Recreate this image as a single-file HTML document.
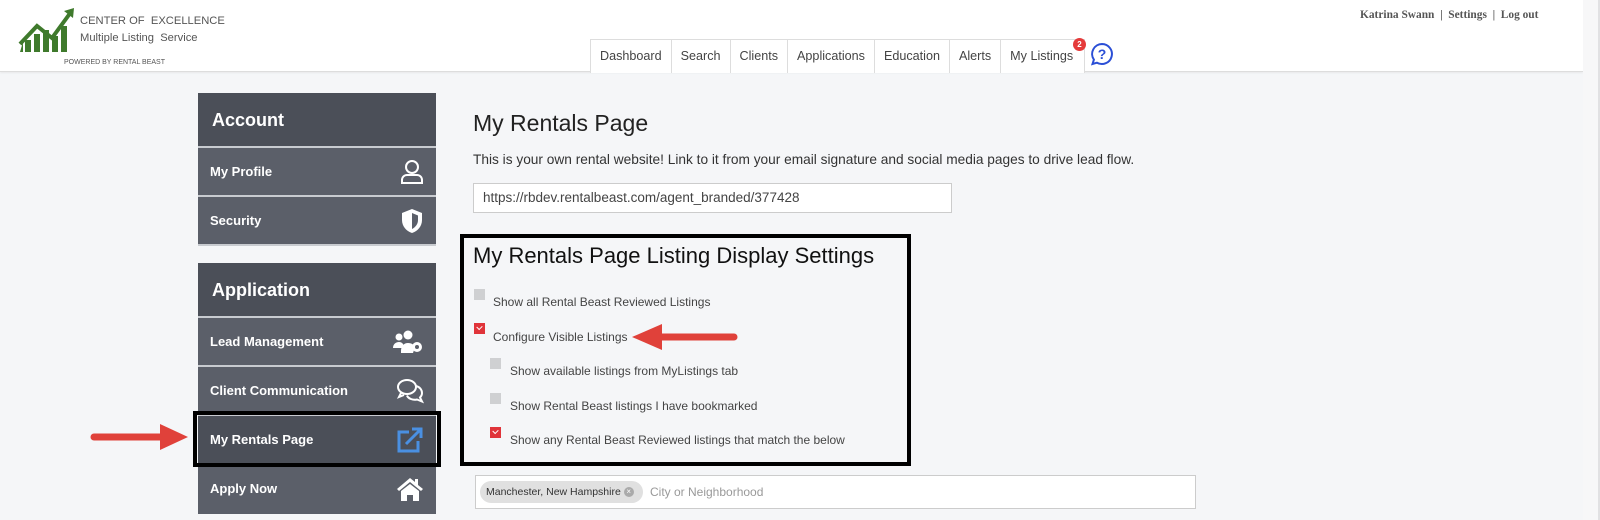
<!DOCTYPE html>
<html><head><meta charset="utf-8"><style>
*{box-sizing:border-box;margin:0;padding:0}
body{width:1600px;height:520px;overflow:hidden;background:#f5f6f8;font-family:"Liberation Sans",sans-serif;position:relative;color:#222}
.hdr{position:absolute;left:0;top:0;width:1583px;height:72px;background:#fff;border-bottom:1px solid #ddd;box-shadow:0 1px 2px rgba(0,0,0,.06)}
.sb{position:absolute;left:1583px;top:0;width:17px;height:520px;background:#f7f7f8;border-right:2px solid #e1e1e3}
.abs{position:absolute;white-space:nowrap}
.tabs{position:absolute;left:590px;top:39px;height:34px;display:flex;border-top:1px solid #ddd}
.tabs div{border-left:1px solid #ddd;padding:0 9px;font-size:12.6px;line-height:33px;color:#444;background:#fff}
.tabs div:last-child{border-right:1px solid #ddd}
.side{position:absolute;left:198px;width:238px}
.sh{background:#4b4f58;color:#fff;font-weight:bold;font-size:18px;padding-left:14px;height:55px;line-height:55px;border-bottom:2px solid #c8cbd0}
.si{background:#5b5f69;color:#fff;font-weight:bold;font-size:13px;padding-left:12px;height:49px;line-height:47px;border-bottom:2px solid #c8cbd0;position:relative}
.si svg{position:absolute;right:12px;top:11px}
.cb{position:absolute;width:11px;height:11px;background:#cfd0d2}
.cb.on{background:#e0343a}
.cb.on::after{content:"";position:absolute;left:3px;top:2px;width:4px;height:3px;border-left:1.5px solid #fff;border-bottom:1.5px solid #fff;transform:rotate(-45deg)}
.lbl{position:absolute;font-size:12px;color:#444;white-space:nowrap}
</style></head><body>
<div class="hdr"></div>
<div class="sb"></div>
<svg class="abs" style="left:18px;top:8px" width="58" height="46" viewBox="0 0 58 46">
<g fill="#3f7a2c"><polygon points="2,44 5,44 5,34"/><rect x="7" y="32" width="6" height="12"/><rect x="16" y="26" width="6" height="18"/><rect x="25" y="22" width="6" height="22"/><rect x="34" y="28" width="6" height="16"/><rect x="43" y="18" width="6" height="26"/></g>
<polyline points="2,36 19,18 34,30 53,4" fill="none" stroke="#3f7a2c" stroke-width="4"/>
<polygon points="56,0 46,3 55,10" fill="#3f7a2c"/></svg>
<div class="abs" style="left:80px;top:15px;font-size:11.2px;color:#555">CENTER OF&nbsp; EXCELLENCE</div>
<div class="abs" style="left:80px;top:32px;font-size:11.2px;color:#555">Multiple Listing&nbsp; Service</div>
<div class="abs" style="left:64px;top:59px;font-size:7px;color:#555">POWERED BY RENTAL BEAST</div>
<div class="abs" style="left:1360px;top:9px;font-size:11.4px;font-weight:bold;color:#555;font-family:'Liberation Serif',serif">Katrina Swann &nbsp;|&nbsp; Settings &nbsp;|&nbsp; Log out</div>
<div class="tabs"><div>Dashboard</div><div>Search</div><div>Clients</div><div>Applications</div><div>Education</div><div>Alerts</div><div style="padding-right:11px">My Listings</div></div>
<div class="abs" style="left:1073px;top:38px;width:13px;height:13px;border-radius:50%;background:#e53a3a;color:#fff;font-size:8px;font-weight:bold;text-align:center;line-height:13px">2</div>
<svg class="abs" style="left:1090px;top:42px" width="24" height="24" viewBox="0 0 24 24"><path d="M12 2a10 10 0 1 1-5 18.7L2.5 22l1.4-4.3A10 10 0 0 1 12 2z" fill="none" stroke="#2b4fd6" stroke-width="2"/><text x="12" y="17" text-anchor="middle" font-size="14" font-weight="bold" fill="#2b4fd6" font-family="Liberation Sans">?</text></svg>
<div class="side" style="top:93px">
<div class="sh">Account</div>
<div class="si">My Profile<svg width="24" height="26" viewBox="0 0 24 26" fill="none" stroke="#fff" stroke-width="2"><circle cx="12" cy="8" r="6"/><path d="M2 24v-3a5 5 0 0 1 5-5h10a5 5 0 0 1 5 5v3z"/></svg></div>
<div class="si">Security<svg width="24" height="26" viewBox="0 0 24 26"><path d="M12 1L2 5v7c0 6 4 11 10 13 6-2 10-7 10-13V5z" fill="#fff"/><path d="M12 5v16c3-1.5 6-4.5 6-9V7.5z" fill="#5b5f69"/></svg></div>
</div>
<div class="side" style="top:263px">
<div class="sh">Application</div>
<div class="si">Lead Management<svg width="32" height="26" viewBox="0 0 32 26" fill="#fff"><circle cx="7" cy="8" r="3.5"/><circle cx="16" cy="6" r="4.5"/><path d="M1 19c0-4 3-6 6-6s5 2 5 6zM9 22c0-5 3-8 7-8s6 2 7 4l-2 6H9z"/><circle cx="25" cy="18" r="5"/><circle cx="25" cy="18" r="2" fill="#5b5f69"/></svg></div>
<div class="si">Client Communication<svg width="28" height="26" viewBox="0 0 28 26" fill="none" stroke="#fff" stroke-width="2"><ellipse cx="11" cy="9" rx="9" ry="7"/><path d="M5 15l-2 4 5-2"/><path d="M20 8c4 1 6 4 6 7 0 2-1 3.5-2 4.5l2 4-5-2c-4 1-9-1-10-4"/></svg></div>
<div class="si" style="background:#4b4f58">My Rentals Page<svg width="28" height="26" viewBox="0 0 28 26" fill="none" stroke="#4a90e2" stroke-width="3"><path d="M13 5H3v19h19V14"/><path d="M10 17L25 2M16 2h9v9" /></svg></div>
<div class="si" style="border:0">Apply Now<svg width="28" height="26" viewBox="0 0 28 26" fill="#fff"><path d="M14 2L1 13l2 2 11-9 11 9 2-2-5-4V3h-3v3z"/><path d="M5 15l9-7 9 7v10h-6v-6h-6v6H5z"/></svg></div>
</div>
<div class="abs" style="left:193px;top:411px;width:248px;height:56px;border:4px solid #000"></div>
<svg class="abs" style="left:90px;top:424px" width="100" height="26"><line x1="4" y1="13" x2="72" y2="13" stroke="#e0413a" stroke-width="7" stroke-linecap="round"/><polygon points="70,0 98,13 70,26" fill="#e0413a"/></svg>
<svg class="abs" style="left:630px;top:324px" width="110" height="26"><line x1="30" y1="13" x2="104" y2="13" stroke="#e0413a" stroke-width="7" stroke-linecap="round"/><polygon points="2,13 32,0 32,26" fill="#e0413a"/></svg>
<div class="abs" style="left:473px;top:110px;font-size:23px;color:#222">My Rentals Page</div>
<div class="abs" style="left:473px;top:152px;font-size:13.7px;color:#333">This is your own rental website! Link to it from your email signature and social media pages to drive lead flow.</div>
<div class="abs" style="left:473px;top:183px;width:479px;height:30px;background:#fff;border:1px solid #ccc;font-size:13.5px;color:#444;padding-left:9px;line-height:28px">https://rbdev.rentalbeast.com/agent_branded/377428</div>
<div class="abs" style="left:460px;top:234px;width:451px;height:232px;border:4px solid #000"></div>
<div class="abs" style="left:473px;top:243px;font-size:22px;color:#111">My Rentals Page Listing Display Settings</div>
<div class="cb" style="left:474px;top:289px"></div><div class="lbl" style="left:493px;top:295px">Show all Rental Beast Reviewed Listings</div>
<div class="cb on" style="left:474px;top:323px"></div><div class="lbl" style="left:493px;top:330px">Configure Visible Listings</div>
<div class="cb" style="left:490px;top:358px"></div><div class="lbl" style="left:510px;top:364px">Show available listings from MyListings tab</div>
<div class="cb" style="left:490px;top:393px"></div><div class="lbl" style="left:510px;top:399px">Show Rental Beast listings I have bookmarked</div>
<div class="cb on" style="left:490px;top:427px"></div><div class="lbl" style="left:510px;top:433px">Show any Rental Beast Reviewed listings that match the below</div>
<div class="abs" style="left:475px;top:475px;width:721px;height:34px;background:#fff;border:1px solid #ccc"></div>
<div class="abs" style="left:480px;top:481px;height:22px;width:163px;border-radius:11px;background:#e0e0e0;font-size:10.5px;color:#333;line-height:22px;padding-left:6px">Manchester, New Hampshire <span style="display:inline-block;width:10px;height:10px;border-radius:50%;background:#aaa;color:#fff;font-size:8px;line-height:10px;text-align:center;vertical-align:middle">×</span></div>
<div class="abs" style="left:650px;top:485px;font-size:12px;color:#999">City or Neighborhood</div>
</body></html>
